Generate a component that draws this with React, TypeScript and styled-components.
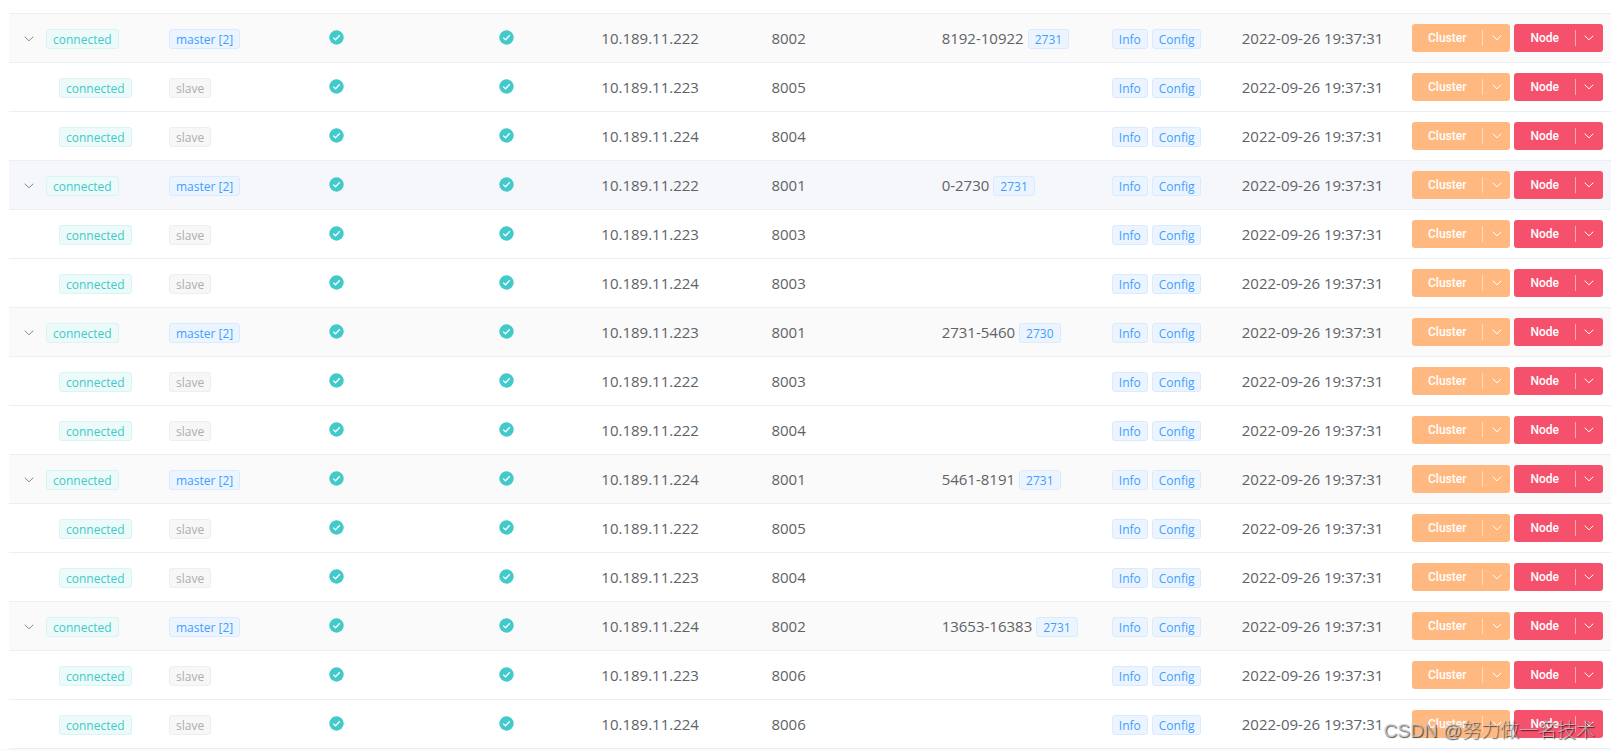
import React from "react";
import styled, { createGlobalStyle, css } from "styled-components";

const GlobalStyle = createGlobalStyle`
  * { box-sizing: border-box; }
  body {
    margin: 0;
    background: #fff;
    color: #606266;
    font-family: "Open Sans", "Noto Sans", "Noto Sans CJK SC", sans-serif;
  }
`;

type Tone = "success" | "primary" | "info";

const tones = {
  success: css`background: #ecfafa; border-color: #d9f4f4; color: #42c9c9;`,
  primary: css`background: #ecf5ff; border-color: #d9ecff; color: #409eff;`,
  info: css`background: #f7f7f7; border-color: #eeeeee; color: #adadad;`,
};

const Page = styled.main`
  position: relative;
  padding: 13px 0 0 9px;
  border-bottom: 2px solid #fafafe;
`;

const Table = styled.table`
  width: 100%;
  min-width: 1300px;
  table-layout: fixed;
  border-collapse: separate;
  border-spacing: 0;
  border-top: 1px solid #ebeef5;
  font-size: 15px;
  line-height: 20px;
`;

const Col = styled.col<{ $width?: number }>`
  width: ${(p) => (p.$width ? `${p.$width}px` : "auto")};
`;

const Row = styled.tr<{ $background: string }>`
  background: ${(p) => p.$background};
`;

const Cell = styled.td<{ $center?: boolean }>`
  height: 49px;
  padding: 0 0 0 ${(p) => (p.$center ? 0 : 10)}px;
  border-bottom: 1px solid #ebeef5;
  text-align: ${(p) => (p.$center ? "center" : "left")};
  vertical-align: middle;
  white-space: nowrap;
`;

const Line = styled.div<{ $gap: number; $indent?: number }>`
  display: flex;
  align-items: center;
  gap: ${(p) => p.$gap}px;
  padding-left: ${(p) => p.$indent ?? 0}px;
`;

const tagBox = css<{ $tone: Tone }>`
  height: 20px;
  margin: 2px 0 0;
  padding: 0 6px;
  border: 1px solid;
  border-radius: 3px;
  font-family: inherit;
  font-size: 12px;
  line-height: 20px;
  ${(p) => tones[p.$tone]}
`;

const Tag = styled.span<{ $tone: Tone }>`
  display: inline-block;
  ${tagBox}
`;

const TagButton = styled.button<{ $tone: Tone }>`
  cursor: pointer;
  ${tagBox}
`;

const ExpandButton = styled.button`
  display: flex;
  width: 19px;
  height: 20px;
  margin-top: 2px;
  padding: 0;
  border: 0;
  align-items: center;
  justify-content: center;
  background: none;
  color: #85888e;
  cursor: pointer;
`;

const StatusIcon = styled.svg`
  display: block;
  width: 15px;
  height: 15px;
  margin: 0 auto 1px;
`;

const SplitButton = styled.div<{ $color: string }>`
  display: flex;
  height: 28px;
  border-radius: 3px;
  background: ${(p) => p.$color};
`;

const ActionButton = styled.button`
  padding: 0 16px;
  border: 0;
  background: none;
  color: #fff;
  font-family: Roboto, "Liberation Sans", sans-serif;
  font-size: 12px;
  font-weight: 500;
  line-height: 28px;
  cursor: pointer;
`;

const CaretButton = styled.button`
  display: flex;
  width: 28px;
  height: 16px;
  margin: 6px 0;
  padding: 0;
  border: 0;
  border-left: 1px solid rgba(255, 255, 255, 0.5);
  align-items: center;
  justify-content: center;
  background: none;
  color: #fff;
  cursor: pointer;
`;

const Watermark = styled.div`
  position: absolute;
  right: 16px;
  bottom: 4px;
  color: rgba(205, 205, 205, 0.75);
  font-family: "Liberation Sans", "Noto Sans CJK SC", sans-serif;
  font-size: 19px;
  font-weight: 300;
  line-height: 28px;
  text-shadow: 1px 1px 1px rgba(0, 0, 0, 0.65);
  pointer-events: none;
`;

const Chevron = () => (
  <svg width="10" height="6" viewBox="0 0 10 6" fill="none" stroke="currentColor" aria-hidden="true">
    <path d="M0.7 0.7 L5 4.8 L9.3 0.7" />
  </svg>
);

const Check = ({ label }: { label: string }) => (
  <StatusIcon viewBox="0 0 15 15" role="img" aria-label={label}>
    <circle cx="7.5" cy="7.5" r="7.2" fill="#42c9c9" />
    <path d="M4.2 7.6 L6.5 9.8 L10.8 5.3" fill="none" stroke="#fff" strokeWidth="1.3" />
  </StatusIcon>
);

interface RedisNode {
  ip: string;
  port: number;
  slots?: string;
  count?: number;
  hovered?: boolean;
}

const nodes: RedisNode[] = [
  { ip: "10.189.11.222", port: 8002, slots: "8192-10922", count: 2731 },
  { ip: "10.189.11.223", port: 8005 },
  { ip: "10.189.11.224", port: 8004 },
  { ip: "10.189.11.222", port: 8001, slots: "0-2730", count: 2731, hovered: true },
  { ip: "10.189.11.223", port: 8003 },
  { ip: "10.189.11.224", port: 8003 },
  { ip: "10.189.11.223", port: 8001, slots: "2731-5460", count: 2730 },
  { ip: "10.189.11.222", port: 8003 },
  { ip: "10.189.11.222", port: 8004 },
  { ip: "10.189.11.224", port: 8001, slots: "5461-8191", count: 2731 },
  { ip: "10.189.11.222", port: 8005 },
  { ip: "10.189.11.223", port: 8004 },
  { ip: "10.189.11.224", port: 8002, slots: "13653-16383", count: 2731 },
  { ip: "10.189.11.223", port: 8006 },
  { ip: "10.189.11.224", port: 8006 },
];

const Action = ({ label, color }: { label: string; color: string }) => (
  <SplitButton $color={color}>
    <ActionButton type="button">{label}</ActionButton>
    <CaretButton type="button" aria-label={`${label} actions`}>
      <Chevron />
    </CaretButton>
  </SplitButton>
);

const NodeRow = ({ node }: { node: RedisNode }) => {
  const master = node.slots !== undefined;
  return (
    <Row $background={node.hovered ? "#f5f7fa" : master ? "#fafafa" : "#fff"}>
      <Cell>
        <Line $gap={8} $indent={master ? 0 : 40}>
          {master && (
            <ExpandButton type="button" aria-label="Collapse replicas" aria-expanded="true">
              <Chevron />
            </ExpandButton>
          )}
          <Tag $tone="success">connected</Tag>
        </Line>
      </Cell>
      <Cell>
        <Line $gap={4}>
          <Tag $tone={master ? "primary" : "info"}>{master ? "master [2]" : "slave"}</Tag>
        </Line>
      </Cell>
      <Cell $center><Check label="In cluster" /></Cell>
      <Cell $center><Check label="Running" /></Cell>
      <Cell>{node.ip}</Cell>
      <Cell>{node.port}</Cell>
      <Cell>
        {master && (
          <Line $gap={4}>
            <span>{node.slots}</span>
            <Tag $tone="primary">{node.count}</Tag>
          </Line>
        )}
      </Cell>
      <Cell>
        <Line $gap={4}>
          <TagButton type="button" $tone="primary">Info</TagButton>
          <TagButton type="button" $tone="primary">Config</TagButton>
        </Line>
      </Cell>
      <Cell>2022-09-26 19:37:31</Cell>
      <Cell>
        <Line $gap={4}>
          <Action label="Cluster" color="#ffb980" />
          <Action label="Node" color="#f5516c" />
        </Line>
      </Cell>
    </Row>
  );
};

export default function App() {
  return (
    <>
      <GlobalStyle />
      <Page>
        <Table>
          <colgroup>
            <Col $width={150} />
            <Col $width={92} />
            <Col />
            <Col />
            <Col />
            <Col />
            <Col />
            <Col $width={130} />
            <Col />
            <Col $width={209} />
          </colgroup>
          <tbody>
            {nodes.map((node) => (
              <NodeRow key={`${node.ip}:${node.port}`} node={node} />
            ))}
          </tbody>
        </Table>
        <Watermark>CSDN @努力做一名技术</Watermark>
      </Page>
    </>
  );
}
